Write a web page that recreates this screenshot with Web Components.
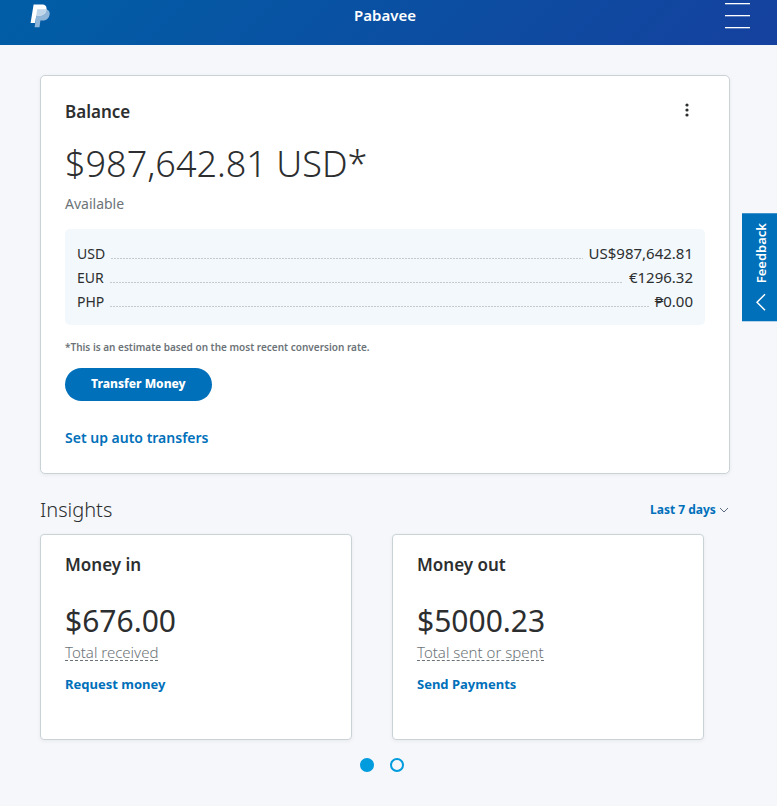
<!DOCTYPE html>
<html lang="en">
<head>
<meta charset="utf-8">
<meta name="viewport" content="width=device-width, initial-scale=1">
<title>Summary</title>
<style>
    body {
        margin: 0;
        background: #f5f7fb;
        color: #2c2e2f;
        font-family: "Noto Sans", "Open Sans", sans-serif;
        font-size: 14px;
        line-height: 20px;
        --blue: #0070ba;
        --grey: #6c7378;
        --border: #cbd2d6;
    }
    main {
        padding: 30px 47px 30px 40px;
    }
</style>
</head>
<body>
    <app-header>Pabavee</app-header>
    <main>
        <balance-card amount="$987,642.81 USD*">
            <currency-row code="USD">US$987,642.81</currency-row>
            <currency-row code="EUR">€1296.32</currency-row>
            <currency-row code="PHP">₱0.00</currency-row>
        </balance-card>
        <insights-panel>
            <insight-card heading="Money in" amount="$676.00" action="Request money">Total received</insight-card>
            <insight-card heading="Money out" amount="$5000.23" action="Send Payments">Total sent or spent</insight-card>
        </insights-panel>
    </main>
    <feedback-tab>Feedback</feedback-tab>

<script>
class AppHeader extends HTMLElement {
    constructor() {
        super();
        this.attachShadow({mode: 'open'});
        this.shadowRoot.innerHTML = `
            <style>
                :host {
                    display: block;
                    background: linear-gradient(135deg, #005ea6 0%, #15419e 100%);
                    color: white;
                }
                header {
                    display: grid;
                    grid-template-columns: 1fr auto 1fr;
                    align-items: center;
                    padding: 0 27px 14px 20px;
                }
                .logo {
                    display: flex;
                    justify-self: start;
                    padding-left: 10px;
                }
                h1 {
                    margin: 0;
                    font-size: 15px;
                    line-height: 31px;
                    font-weight: 600;
                }
                button {
                    display: flex;
                    flex-direction: column;
                    justify-self: end;
                    gap: 10px;
                    width: 25px;
                    padding: 0;
                    border: 0;
                    background: none;
                    cursor: pointer;
                }
                button span {
                    height: 1px;
                    width: 100%;
                    background: white;
                    background-clip: padding-box;
                    border-bottom: 1px solid rgba(255, 255, 255, 0.3);
                }
            </style>
            <header>
                <a class="logo" href="#" aria-label="Home">
                    <svg width="20" height="24" viewBox="0 0 20 24">
                        <path fill="#8fb5d8" d="M7.2 5.2h7.9c3.4 0 5.1 2.3 4.5 5.6-.7 3.9-3.3 5.8-7 5.8h-2.2L9.5 23.3H4.6z"/>
                        <path fill="#fff" d="M3.6.5h8.2c3.4 0 5.2 1.8 4.7 5.1-.7 4.2-3.5 6-7.4 6H6.3L5 19H.6z"/>
                        <path fill="#bfd5e9" d="M7.2 5.2h9.3v.4c-.7 4.2-3.5 6-7.4 6H6.3z"/>
                    </svg>
                </a>
                <h1><slot></slot></h1>
                <button type="button" aria-label="Menu"><span></span><span></span><span></span></button>
            </header>
        `;
    }
}

class CurrencyRow extends HTMLElement {
    constructor() {
        super();
        this.attachShadow({mode: 'open'});
        this.shadowRoot.innerHTML = `
            <style>
                :host {
                    display: flex;
                    align-items: baseline;
                    gap: 6px;
                    font-size: 15px;
                    line-height: 24px;
                }
                .code {
                    font-size: 14px;
                    line-height: 20px;
                }
                .line {
                    flex: 1;
                    height: 1px;
                    background: repeating-linear-gradient(90deg, #c3c9cd 0 2px, transparent 2px 3px);
                }
            </style>
            <span class="code"></span>
            <span class="line"></span>
            <slot></slot>
        `;
    }

    connectedCallback() {
        this.shadowRoot.querySelector('.code').textContent = this.getAttribute('code');
    }
}

class BalanceCard extends HTMLElement {
    constructor() {
        super();
        this.attachShadow({mode: 'open'});
        this.shadowRoot.innerHTML = `
            <style>
                :host {
                    display: block;
                    padding: 24px;
                    background: white;
                    border: 1px solid var(--border);
                    border-radius: 5px;
                    box-shadow: 0 1px 4px rgba(0, 0, 0, 0.06);
                }
                .top {
                    display: flex;
                    justify-content: space-between;
                    align-items: flex-start;
                }
                h2 {
                    margin: 0;
                    font-size: 17px;
                    line-height: 24px;
                    font-weight: 600;
                }
                .more {
                    display: flex;
                    padding: 3px 16px;
                    border: 0;
                    background: none;
                    cursor: pointer;
                }
                .amount {
                    margin: 16px 0 6px;
                    font-size: 36px;
                    line-height: 48px;
                    font-weight: 300;
                }
                .available {
                    color: var(--grey);
                }
                .currencies {
                    margin: 15px 0 14px;
                    padding: 12px;
                    border-radius: 5px;
                    background: #f2f8fc;
                }
                .note {
                    color: var(--grey);
                    font-size: 10px;
                    line-height: 16px;
                    font-weight: 600;
                }
                .transfer {
                    display: block;
                    margin: 13px 0 27px;
                    padding: 6px 26px 7px;
                    border: 0;
                    border-radius: 17px;
                    background: var(--blue);
                    color: white;
                    font: inherit;
                    font-size: 12px;
                    line-height: 20px;
                    font-weight: 800;
                    cursor: pointer;
                }
                a {
                    display: table;
                    margin-bottom: 1px;
                    color: var(--blue);
                    font-weight: 600;
                    text-decoration: none;
                }
            </style>
            <div class="top">
                <h2>Balance</h2>
                <button class="more" type="button" aria-label="More options">
                    <svg width="4" height="14" viewBox="0 0 4 14" fill="#2c2e2f">
                        <circle cx="2" cy="2" r="1.6"/>
                        <circle cx="2" cy="7" r="1.6"/>
                        <circle cx="2" cy="12" r="1.6"/>
                    </svg>
                </button>
            </div>
            <div class="amount"></div>
            <div class="available">Available</div>
            <div class="currencies"><slot></slot></div>
            <div class="note">*This is an estimate based on the most recent conversion rate.</div>
            <button class="transfer" type="button">Transfer Money</button>
            <a href="#">Set up auto transfers</a>
        `;
    }

    connectedCallback() {
        this.shadowRoot.querySelector('.amount').textContent = this.getAttribute('amount');
    }
}

class InsightsPanel extends HTMLElement {
    constructor() {
        super();
        this.attachShadow({mode: 'open'});
        this.shadowRoot.innerHTML = `
            <style>
                :host {
                    display: block;
                    margin-top: 22px;
                }
                .top {
                    display: flex;
                    justify-content: space-between;
                    align-items: center;
                }
                h2 {
                    margin: 0;
                    font-size: 20px;
                    line-height: 28px;
                    font-weight: 300;
                }
                .period {
                    display: flex;
                    align-items: center;
                    gap: 4px;
                    padding-right: 2px;
                }
                select {
                    appearance: none;
                    padding: 0;
                    border: 0;
                    background: none;
                    color: var(--blue);
                    font: inherit;
                    font-size: 12px;
                    font-weight: 700;
                }
                .cards {
                    display: grid;
                    grid-template-columns: 1fr 1fr;
                    gap: 40px;
                    margin: 10px 0 18px;
                    padding-right: 26px;
                }
                .dots {
                    display: flex;
                    justify-content: center;
                    gap: 10px;
                }
                .dots button {
                    width: 14px;
                    height: 14px;
                    margin-right: 6px;
                    padding: 0;
                    border: 2px solid #009cde;
                    border-radius: 50%;
                    background: none;
                }
                .dots .active {
                    background: #009cde;
                }
            </style>
            <div class="top">
                <h2>Insights</h2>
                <label class="period">
                    <select aria-label="Period"><option>Last 7 days</option></select>
                    <svg width="8" height="6" viewBox="0 0 8 6" fill="none" stroke="#5b6b7d">
                        <path d="M0 1l4 4 4-4"/>
                    </svg>
                </label>
            </div>
            <div class="cards"><slot></slot></div>
            <div class="dots">
                <button class="active" type="button" aria-label="Page 1"></button>
                <button type="button" aria-label="Page 2"></button>
            </div>
        `;
    }
}

class InsightCard extends HTMLElement {
    constructor() {
        super();
        this.attachShadow({mode: 'open'});
        this.shadowRoot.innerHTML = `
            <style>
                :host {
                    display: block;
                    padding: 18px 24px 45px;
                    background: white;
                    border: 1px solid var(--border);
                    border-radius: 4px;
                    box-shadow: 0 1px 4px rgba(0, 0, 0, 0.06);
                }
                h3 {
                    margin: 0;
                    font-size: 17px;
                    line-height: 24px;
                    font-weight: 600;
                }
                .amount {
                    margin: 26px 0 6px;
                    font-size: 30px;
                    line-height: 36px;
                }
                .label {
                    display: table;
                    border-bottom: 1px dashed var(--grey);
                    color: var(--grey);
                    font-size: 15px;
                    font-weight: 300;
                    line-height: 15px;
                }
                a {
                    display: table;
                    margin-top: 13px;
                    color: var(--blue);
                    font-size: 13px;
                    font-weight: 700;
                    text-decoration: none;
                }
            </style>
            <h3></h3>
            <div class="amount"></div>
            <div class="label"><slot></slot></div>
            <a href="#"></a>
        `;
    }

    connectedCallback() {
        this.shadowRoot.querySelector('h3').textContent = this.getAttribute('heading');
        this.shadowRoot.querySelector('.amount').textContent = this.getAttribute('amount');
        this.shadowRoot.querySelector('a').textContent = this.getAttribute('action');
    }
}

class FeedbackTab extends HTMLElement {
    constructor() {
        super();
        this.attachShadow({mode: 'open'});
        this.shadowRoot.innerHTML = `
            <style>
                :host {
                    position: fixed;
                    top: 213px;
                    right: 0;
                }
                button {
                    display: flex;
                    align-items: center;
                    gap: 10px;
                    padding: 10px 9px 10px 6px;
                    border: 0;
                    background: var(--blue);
                    color: white;
                    font: inherit;
                    font-size: 13px;
                    line-height: 20px;
                    font-weight: 600;
                    writing-mode: vertical-rl;
                    transform: rotate(180deg);
                    cursor: pointer;
                }
            </style>
            <button type="button">
                <svg width="10" height="18" viewBox="0 0 10 18" fill="none" stroke="white" stroke-width="1.5">
                    <path d="M1 1l8 8-8 8"/>
                </svg>
                <slot></slot>
            </button>
        `;
    }
}

customElements.define('app-header', AppHeader);
customElements.define('currency-row', CurrencyRow);
customElements.define('balance-card', BalanceCard);
customElements.define('insights-panel', InsightsPanel);
customElements.define('insight-card', InsightCard);
customElements.define('feedback-tab', FeedbackTab);
</script>
</body>
</html>
